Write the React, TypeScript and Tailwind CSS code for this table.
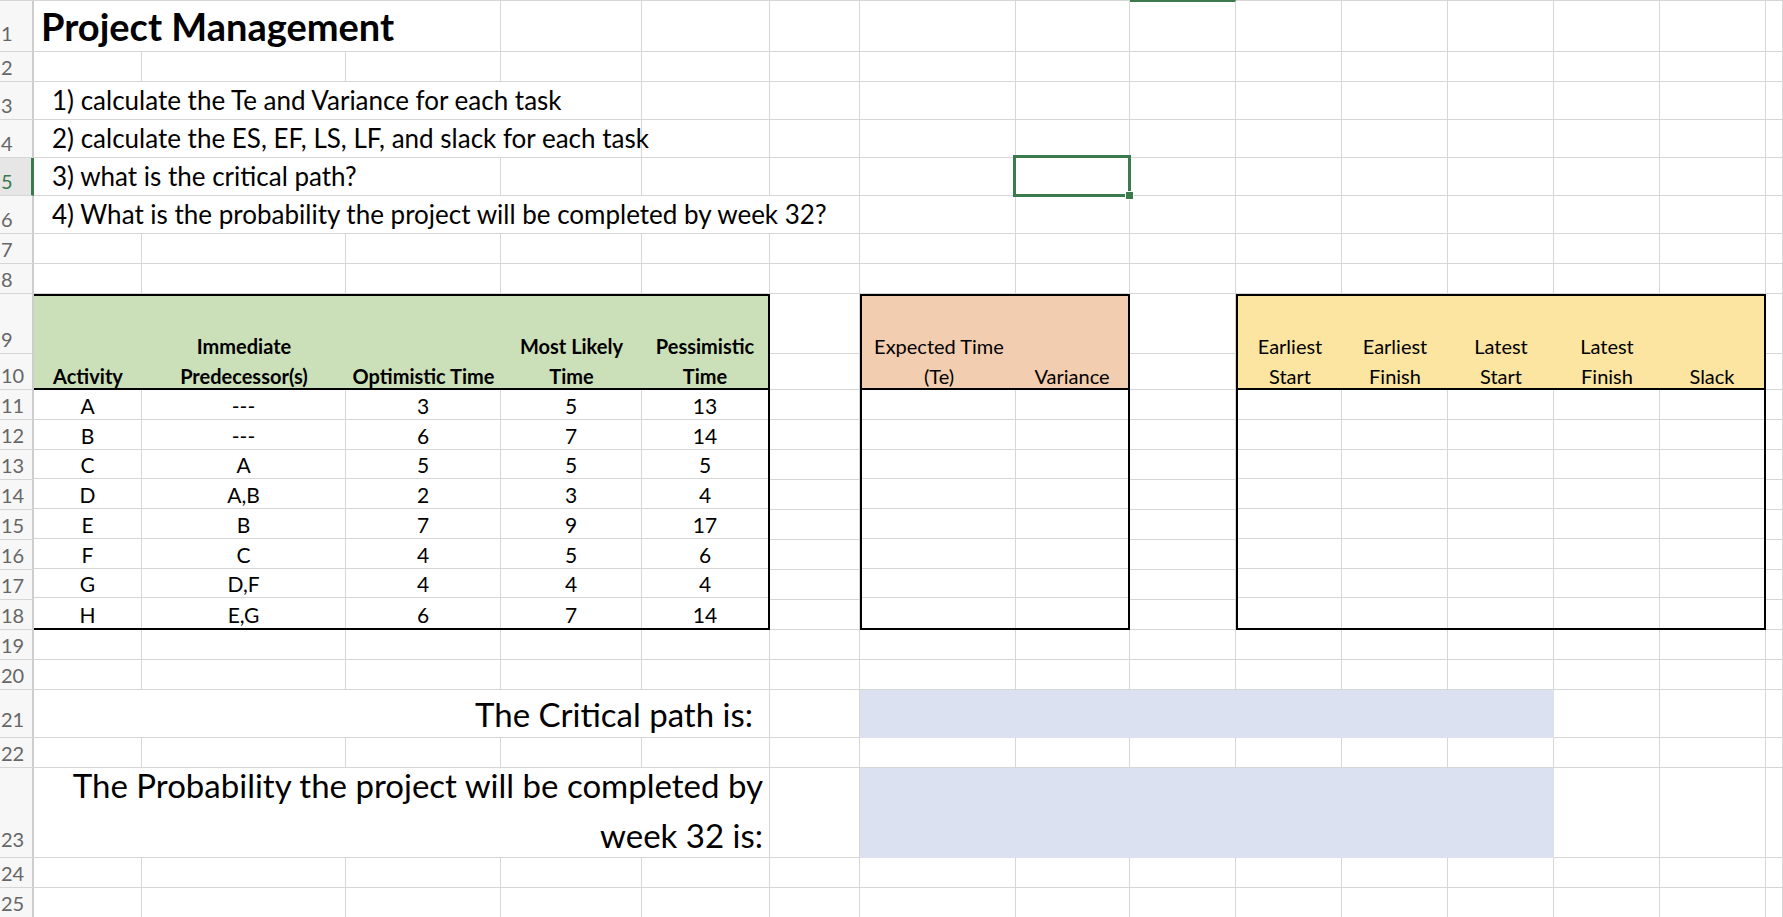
import type { ReactNode } from "react";

const GRID =
  "grid grid-cols-[34px_108px_204px_155px_141px_128px_90px_156px_114px_106px_106px_106px_106px_106px_106px_1fr]";
const LINE = "border-r border-b border-[#d6d6d6]";

const SPAN: Record<number, string> = {
  1: "",
  2: "col-span-2",
  3: "col-span-3",
  4: "col-span-4",
  5: "col-span-5",
  6: "col-span-6",
};

type Cell = { span?: number; cls?: string; body?: ReactNode };

function RowNum({ n, pad = "pb-[4px]", active = false }: { n: number; pad?: string; active?: boolean }) {
  return (
    <div
      className={`flex w-full items-end overflow-hidden pl-[1px] leading-none text-[20px] border-b border-[#d6d6d6] ${pad} ${
        active
          ? "bg-[#e6e6e6] text-[#3b7a4c] border-r-[3px] border-r-[#3b7a4c]"
          : "bg-[#f7f7f7] text-[#666] border-r-2 border-r-[#cdcdcd]"
      }`}
    >
      {n}
    </div>
  );
}

function Row({ n, h, cells, numPad, active }: { n: number; h: string; cells: Cell[]; numPad?: string; active?: boolean }) {
  const used = cells.reduce((s, c) => s + (c.span ?? 1), 0);
  const rest = Array.from({ length: Math.max(0, 15 - used) }, () => ({}) as Cell);
  return (
    <div className={`${GRID} ${h}`}>
      <RowNum n={n} pad={numPad} active={active} />
      {[...cells, ...rest].map((c, i) => (
        <div key={i} className={`${SPAN[c.span ?? 1]} ${c.cls ?? LINE}`}>
          {c.body}
        </div>
      ))}
    </div>
  );
}

const blanks = (k: number): Cell[] => Array.from({ length: k }, () => ({}));

function Note({ children }: { children: ReactNode }) {
  return (
    <div className="flex h-full items-end whitespace-nowrap pl-[18px] pb-[6px] text-[26px] leading-none">
      {children}
    </div>
  );
}

type Head = { l1?: string; l2?: string };

function Table({
  cols,
  bg,
  left,
  bold,
  heads,
  data,
}: {
  cols: string;
  bg: string;
  left: boolean;
  bold: boolean;
  heads: Head[];
  data: string[][];
}) {
  return (
    <div className={`flex h-full flex-col border-y-2 border-r-2 border-black ${left ? "border-l-2" : ""}`}>
      <div className={`grid ${cols} h-[94px] border-b-2 border-black ${bg}`}>
        {heads.map((h, i) => (
          <div
            key={i}
            className={`flex flex-col items-center justify-end gap-[10px] pb-[2px] text-[20px] leading-none whitespace-nowrap ${
              bold ? "font-bold" : ""
            }`}
          >
            {h.l1 && <span>{h.l1}</span>}
            {h.l2 && <span>{h.l2}</span>}
          </div>
        ))}
      </div>
      {data.map((r, ri) => (
        <div key={ri} className={`grid ${cols} flex-1`}>
          {r.map((v, ci) => (
            <div
              key={ci}
              className={`flex items-end justify-center pb-[3px] text-[21px] leading-none ${
                ci < r.length - 1 ? "border-r border-[#d6d6d6]" : ""
              } ${ri < data.length - 1 ? "border-b border-[#d6d6d6]" : ""}`}
            >
              {v}
            </div>
          ))}
        </div>
      ))}
    </div>
  );
}

function Filler({ w, nums }: { w: string; nums?: boolean }) {
  const hs = ["h-[60px]", "h-[36px]", ...Array.from({ length: 8 }, () => "h-[30px]")];
  return (
    <div className={`flex flex-col ${w}`}>
      {hs.map((h, i) =>
        nums ? (
          <div key={i} className={`${h} flex`}>
            <RowNum n={i + 9} />
          </div>
        ) : (
          <div key={i} className={`${h} ${LINE}`} />
        )
      )}
    </div>
  );
}

const tasks = [
  ["A", "---", "3", "5", "13"],
  ["B", "---", "6", "7", "14"],
  ["C", "A", "5", "5", "5"],
  ["D", "A,B", "2", "3", "4"],
  ["E", "B", "7", "9", "17"],
  ["F", "C", "4", "5", "6"],
  ["G", "D,F", "4", "4", "4"],
  ["H", "E,G", "6", "7", "14"],
];

export default function App() {
  return (
    <div className="h-[917px] w-[1783px] overflow-hidden bg-white font-['Lato','Liberation_Sans',sans-serif] text-black">
      <div className="border-t border-[#d6d6d6]">
        <Row
          n={1}
          h="h-[51px]"
          numPad="pb-[8px]"
          cells={[
            {
              span: 3,
              body: (
                <div className="flex h-full items-end pl-[7px] pb-[6px] text-[38px] font-bold leading-none whitespace-nowrap">
                  Project Management
                </div>
              ),
            },
            ...blanks(3),
            {},
            {},
            { cls: `${LINE} border-t-2 border-t-[#3b7a4c] -mt-px` },
          ]}
        />
      </div>
      <Row n={2} h="h-[30px]" cells={[]} />
      <Row n={3} h="h-[38px]" cells={[{ span: 4, body: <Note>1) calculate the Te and Variance for each task</Note> }]} />
      <Row
        n={4}
        h="h-[38px]"
        cells={[{ span: 4, body: <Note>2) calculate the ES, EF, LS, LF, and slack for each task</Note> }]}
      />
      <Row
        n={5}
        h="h-[38px]"
        active
        cells={[
          { span: 3, body: <Note>3) what is the critical path?</Note> },
          ...blanks(4),
          {
            cls: `${LINE} relative`,
            body: (
              <>
                <div className="absolute -left-[3px] -top-[3px] -right-[2px] -bottom-[2px] border-[3px] border-[#3b7a4c]" />
                <div className="absolute -right-[5px] -bottom-[5px] h-[9px] w-[9px] border border-white bg-[#3b7a4c]" />
              </>
            ),
          },
        ]}
      />
      <Row
        n={6}
        h="h-[38px]"
        cells={[{ span: 6, body: <Note>4) What is the probability the project will be completed by week 32?</Note> }]}
      />
      <Row n={7} h="h-[30px]" cells={[]} />
      <Row n={8} h="h-[30px]" cells={[]} />

      <div className="flex h-[336px]">
        <Filler w="w-[34px]" nums />
        <div className="w-[736px]">
          <Table
            cols="grid-cols-[108px_204px_155px_141px_1fr]"
            bg="bg-[#cbe0b9]"
            left={false}
            bold
            heads={[
              { l2: "Activity" },
              { l1: "Immediate", l2: "Predecessor(s)" },
              { l2: "Optimistic Time" },
              { l1: "Most Likely", l2: "Time" },
              { l1: "Pessimistic", l2: "Time" },
            ]}
            data={tasks}
          />
        </div>
        <Filler w="w-[90px]" />
        <div className="w-[270px]">
          <Table
            cols="grid-cols-[154px_1fr]"
            bg="bg-[#f2cdb0]"
            left
            bold={false}
            heads={[{ l1: "Expected Time", l2: "(Te)" }, { l2: "Variance" }]}
            data={tasks.map(() => ["", ""])}
          />
        </div>
        <Filler w="w-[106px]" />
        <div className="w-[530px]">
          <Table
            cols="grid-cols-[104px_106px_106px_106px_1fr]"
            bg="bg-[#fbe5a1]"
            left
            bold={false}
            heads={[
              { l1: "Earliest", l2: "Start" },
              { l1: "Earliest", l2: "Finish" },
              { l1: "Latest", l2: "Start" },
              { l1: "Latest", l2: "Finish" },
              { l2: "Slack" },
            ]}
            data={tasks.map(() => ["", "", "", "", ""])}
          />
        </div>
        <Filler w="flex-1" />
      </div>

      <Row n={19} h="h-[30px]" cells={[]} />
      <Row n={20} h="h-[30px]" cells={[]} />
      <Row
        n={21}
        h="h-[48px]"
        numPad="pb-[8px]"
        cells={[
          {
            span: 5,
            body: (
              <div className="flex h-full items-end justify-end pr-[16px] pb-[6px] text-[33px] leading-none whitespace-nowrap">
                The Critical path is:
              </div>
            ),
          },
          {},
          { span: 6, cls: "bg-[#dbe1f1]" },
        ]}
      />
      <Row n={22} h="h-[30px]" cells={[]} />
      <Row
        n={23}
        h="h-[90px]"
        numPad="pb-[8px]"
        cells={[
          {
            span: 5,
            body: (
              <div className="flex h-full flex-col items-end justify-end gap-[17px] pr-[6px] pb-[5px] text-[33px] leading-none whitespace-nowrap">
                <span>The Probability the project will be completed by</span>
                <span>week 32 is:</span>
              </div>
            ),
          },
          {},
          { span: 6, cls: "bg-[#dbe1f1]" },
        ]}
      />
      <Row n={24} h="h-[30px]" cells={[]} />
      <Row n={25} h="h-[30px]" cells={[]} />
    </div>
  );
}
